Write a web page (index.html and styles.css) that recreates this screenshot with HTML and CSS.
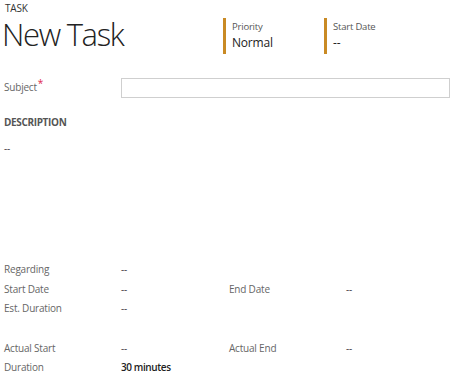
FILE: index.html
```html
<!DOCTYPE html>
<html lang="en">
<head>
    <meta charset="UTF-8">
    <title>New Task</title>
    <link rel="stylesheet" href="styles.css">
</head>
<body>
    <div class="header">
        <div class="title-block">
            <div class="entity">TASK</div>
            <h1>New Task</h1>
        </div>
        <div class="header-field">
            <div class="hf-label">Priority</div>
            <div class="hf-value">Normal</div>
        </div>
        <div class="header-field">
            <div class="hf-label">Start Date</div>
            <div class="hf-value">--</div>
        </div>
    </div>

    <div class="subject-row">
        <label class="label">Subject<span class="req">*</span></label>
        <input type="text" class="text-input">
    </div>

    <h2 class="section-title">DESCRIPTION</h2>
    <div class="description">--</div>

    <div class="details">
        <div class="label">Regarding</div>
        <div class="value">--</div>
        <div></div>
        <div></div>

        <div class="label">Start Date</div>
        <div class="value">--</div>
        <div class="label">End Date</div>
        <div class="value">--</div>

        <div class="label">Est. Duration</div>
        <div class="value">--</div>
        <div></div>
        <div></div>

        <div class="spacer"></div>

        <div class="label">Actual Start</div>
        <div class="value">--</div>
        <div class="label">Actual End</div>
        <div class="value">--</div>

        <div class="label">Duration</div>
        <div class="value strong">30 minutes</div>
        <div></div>
        <div></div>
    </div>
</body>
</html>
```

FILE: styles.css
```css
body {
    font-family: "Open Sans", "Noto Sans", sans-serif;
    margin: 0;
    padding: 0 4px;
    background: #fff;
    color: #444;
    letter-spacing: -0.2px;
}

.header {
    display: flex;
    align-items: flex-start;
    padding-top: 2px;
}

.title-block {
    width: 219px;
}

.entity {
    font-size: 10px;
    line-height: 10px;
    margin-top: 1px;
    color: #333;
    padding-left: 1px;
}

h1 {
    margin: 5px 0 0 -2px;
    font-size: 31px;
    font-weight: 300;
    line-height: 32px;
    letter-spacing: -1.3px;
    color: #222;
}

.header-field {
    box-sizing: border-box;
    width: 101px;
    margin-top: 16px;
    border-left: 3px solid #c98a24;
    padding: 2px 0 2px 6px;
}

.hf-label {
    font-size: 9.5px;
    line-height: 14px;
    color: #555;
}

.hf-value {
    font-size: 12px;
    line-height: 18px;
    color: #222;
}

.subject-row {
    display: grid;
    grid-template-columns: 117px 1fr;
    align-items: center;
    margin-top: 24px;
    margin-right: 20px;
}

.label {
    font-size: 10px;
    color: #666;
    line-height: 19.6px;
}

.req {
    color: #e0264a;
    font-size: 10px;
    vertical-align: top;
    position: relative;
    top: -4px;
    margin-left: 1px;
}

.text-input {
    height: 20px;
    box-sizing: border-box;
    border: 1px solid #cfcfcf;
    margin: 0;
    padding: 0 4px;
}

.section-title {
    margin: 17px 0 0;
    font-size: 10px;
    font-weight: 700;
    letter-spacing: -0.35px;
    color: #555;
    line-height: 14px;
}

.description {
    margin-top: 12px;
    font-size: 10px;
    color: #444;
    line-height: 14px;
}

.details {
    display: grid;
    grid-template-columns: 117px 108px 117px 1fr;
    margin-top: 105px;
}

.value {
    font-size: 10px;
    color: #444;
    line-height: 19.6px;
}

.value.strong {
    font-weight: 600;
    letter-spacing: -0.4px;
    color: #222;
}

.spacer {
    grid-column: 1 / -1;
    height: 20px;
}
```
